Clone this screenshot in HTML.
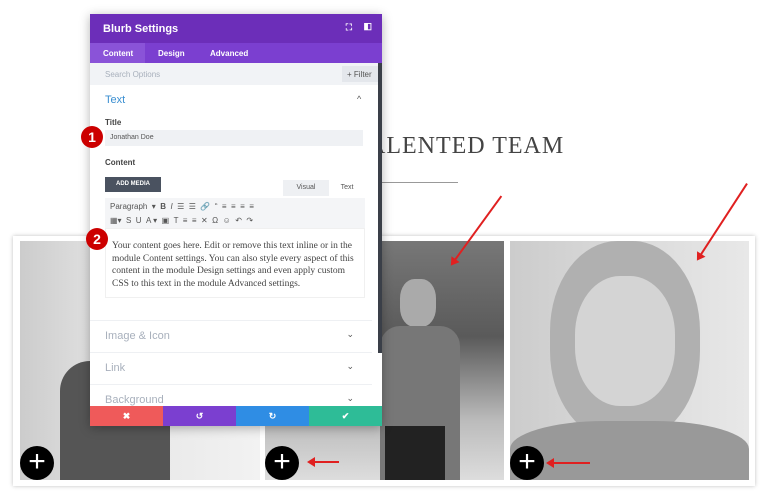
<!DOCTYPE html><html><head><style>
*{margin:0;padding:0;box-sizing:border-box}
body{width:768px;height:497px;background:#fff;position:relative;overflow:hidden;font-family:"Liberation Sans",sans-serif}
.abs{position:absolute}
.photo{position:absolute;top:241px;height:239px;overflow:hidden}
.plus{position:absolute;width:34px;height:34px;border-radius:50%;background:#000;color:#fff;font-size:30px;line-height:32px;text-align:center;font-weight:300}
.arrow{position:absolute;height:2px;background:#e02020;transform-origin:0 50%}
.arrow:before{content:"";position:absolute;left:-2px;top:-4px;border-right:8px solid #e02020;border-top:5px solid transparent;border-bottom:5px solid transparent}
.panel{position:absolute;left:90px;top:14px;width:292px;height:412px;background:#fff;box-shadow:0 2px 10px rgba(0,0,0,.3);overflow:hidden}
.sec{position:absolute;left:0;width:282px;height:32px;border-top:1px solid #eef0f3;font-size:11px;color:#a8b0bc;padding:9px 15px}
.sec span{position:absolute;right:18px;top:8px;color:#555;font-size:9px}
.badge{position:absolute;width:22px;height:22px;border-radius:50%;background:#c00;color:#fff;font-weight:bold;font-size:14px;text-align:center;line-height:22px;z-index:5}
</style></head><body>
<div class="abs" style="left:368px;top:133px;font-family:'Liberation Serif',serif;font-size:24px;color:#444;letter-spacing:1px">ALENTED TEAM</div>
<div class="abs" style="left:380px;top:182px;width:78px;height:1px;background:#999"></div>
<div class="abs" style="left:13px;top:236px;width:742px;height:250px;background:#fff;box-shadow:0 0 4px rgba(0,0,0,.25)"></div>
<div class="photo" style="left:20px;width:240px;background:linear-gradient(90deg,#ccc,#e6e6e6 40%,#f2f2f2)">
 <div class="abs" style="left:40px;top:120px;width:110px;height:130px;background:#555;border-radius:30px 30px 0 0"></div></div>
<div class="photo" style="left:265px;width:239px;background:linear-gradient(180deg,#777 0%,#5a5a5a 40%,#bbb 75%,#ddd)">
 <div class="abs" style="left:135px;top:38px;width:36px;height:48px;background:#aaa;border-radius:40%"></div>
 <div class="abs" style="left:115px;top:85px;width:80px;height:160px;background:#777;border-radius:20px 20px 0 0"></div>
 <div class="abs" style="left:120px;top:185px;width:60px;height:60px;background:#222"></div></div>
<div class="photo" style="left:510px;width:239px;background:linear-gradient(90deg,#ccc,#ddd 60%,#e8e8e8)">
 <div class="abs" style="left:40px;top:0;width:150px;height:200px;background:#b0b0b0;border-radius:45%"></div>
 <div class="abs" style="left:65px;top:35px;width:100px;height:130px;background:#d4d4d4;border-radius:45%"></div>
 <div class="abs" style="left:0;top:180px;width:239px;height:70px;background:#999;border-radius:40% 40% 0 0"></div></div>
<div class="plus" style="left:20px;top:446px">+</div>
<div class="plus" style="left:265px;top:446px">+</div>
<div class="plus" style="left:510px;top:446px">+</div>
<div class="arrow" style="left:309px;top:461px;width:30px"></div>
<div class="arrow" style="left:548px;top:462px;width:42px"></div>
<div class="arrow" style="left:452px;top:263px;width:84px;transform:rotate(-54deg)"></div>
<div class="arrow" style="left:698px;top:258px;width:90px;transform:rotate(-57deg)"></div>
<div class="panel">
 <div class="abs" style="left:0;top:0;width:292px;height:29px;background:#6c2eb9;color:#fff;font-size:11px;font-weight:bold;padding:9px 13px">Blurb Settings<span style="position:absolute;right:30px;top:8px;font-size:9px">⛶</span><span style="position:absolute;right:10px;top:7px;font-size:9px">◧</span></div>
 <div class="abs" style="left:0;top:29px;width:292px;height:20px;background:#7b3fd0;color:#fff;font-size:8px;font-weight:bold">
  <div class="abs" style="left:0;top:0;width:55px;height:20px;background:#8a53d8;padding:6px 13px">Content</div>
  <div class="abs" style="left:68px;top:6px">Design</div><div class="abs" style="left:120px;top:6px">Advanced</div></div>
 <div class="abs" style="left:0;top:49px;width:292px;height:22px;background:#f1f3f6;font-size:8px;color:#a8b0bc;padding:7px 15px">Search Options
  <div class="abs" style="right:4px;top:3px;width:36px;height:16px;background:#e4e7ec;color:#555;padding:4px 5px">+ Filter</div></div>
 <div class="abs" style="left:288px;top:49px;width:4px;height:290px;background:#3a3f48"></div>
 <div class="abs" style="left:15px;top:80px;font-size:11px;color:#3b8fd1">Text</div>
 <div class="abs" style="left:267px;top:80px;font-size:9px;color:#555">^</div>
 <div class="abs" style="left:15px;top:104px;font-size:8px;font-weight:bold;color:#444">Title</div>
 <div class="abs" style="left:15px;top:116px;width:258px;height:16px;background:#eff1f4;font-size:7px;color:#555;padding:4px 5px">Jonathan Doe</div>
 <div class="abs" style="left:15px;top:144px;font-size:8px;font-weight:bold;color:#444">Content</div>
 <div class="abs" style="left:15px;top:163px;width:56px;height:15px;background:#4a5260;color:#fff;font-size:6px;font-weight:bold;text-align:center;line-height:15px">ADD MEDIA</div>
 <div class="abs" style="left:193px;top:166px;width:46px;height:16px;background:#eef0f3;font-size:7px;color:#555;text-align:center;line-height:16px">Visual</div>
 <div class="abs" style="left:239px;top:166px;width:36px;height:16px;background:#fff;font-size:7px;color:#555;text-align:center;line-height:16px">Text</div>
 <div class="abs" style="left:15px;top:184px;width:260px;height:30px;background:#f4f5f7;font-size:8px;color:#555;padding:2px 5px;line-height:14px;white-space:nowrap">Paragraph &nbsp;▾ &nbsp;<b>B</b> &nbsp;<i>I</i> &nbsp;☰ &nbsp;☰ &nbsp;🔗 &nbsp;“ &nbsp;≡ &nbsp;≡ &nbsp;≡ &nbsp;≡<br>▦▾ &nbsp;S &nbsp;U &nbsp;A ▾ &nbsp;▣ &nbsp;T &nbsp;≡ &nbsp;≡ &nbsp;✕ &nbsp;Ω &nbsp;☺ &nbsp;↶ &nbsp;↷</div>
 <div class="abs" style="left:15px;top:214px;width:260px;height:70px;border:1px solid #f0f0f0;font-family:'Liberation Serif',serif;font-size:9.5px;line-height:12.5px;color:#444;padding:11px 6px">Your content goes here. Edit or remove this text inline or in the module Content settings. You can also style every aspect of this content in the module Design settings and even apply custom CSS to this text in the module Advanced settings.</div>
 <div class="sec" style="top:306px">Image &amp; Icon<span>⌄</span></div>
 <div class="sec" style="top:338px">Link<span>⌄</span></div>
 <div class="sec" style="top:370px">Background<span>⌄</span></div>
 <div class="abs" style="left:0;top:392px;width:292px;height:20px;display:flex;color:#fff;font-size:9px;font-weight:bold;text-align:center;line-height:20px">
  <div style="flex:1;background:#ef5a5a">✖</div><div style="flex:1;background:#7b3fd0">↺</div><div style="flex:1;background:#2f8de4">↻</div><div style="flex:1;background:#2ebc97">✔</div></div>
</div>
<div class="badge" style="left:81px;top:126px">1</div>
<div class="badge" style="left:86px;top:228px">2</div>
</body></html>
